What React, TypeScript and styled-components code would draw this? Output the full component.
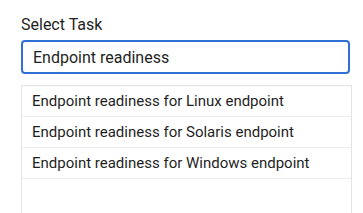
import React from 'react'
import styled, { createGlobalStyle } from 'styled-components'

const GlobalStyle = createGlobalStyle`
  body {
    margin: 0;
    background: #ffffff;
    font-family: Roboto, "Liberation Sans", sans-serif;
    color: #1f1f1f;
    overflow: hidden;
  }
`

const options = [
  'Endpoint readiness for Linux endpoint',
  'Endpoint readiness for Solaris endpoint',
  'Endpoint readiness for Windows endpoint',
]

export default function App() {
  return (
    <>
      <GlobalStyle />
      <Field>
        <Label htmlFor="task">Select Task</Label>
        <SearchInput id="task" defaultValue="Endpoint readiness" />
        <OptionList>
          {options.map((o) => (
            <OptionRow key={o}>{o}</OptionRow>
          ))}
        </OptionList>
      </Field>
    </>
  )
}

const Field = styled.div`
  display: flex;
  flex-direction: column;
  padding: 15px 0 0 21px;
  width: 331px;
`

const Label = styled.label`
  font-size: 16px;
  line-height: 20px;
  margin-bottom: 5px;
  color: #1f1f1f;
`

const SearchInput = styled.input`
  box-sizing: border-box;
  width: 329px;
  height: 34px;
  padding: 0 10px;
  border: 2px solid #2f6fd6;
  border-radius: 4px;
  font-family: Roboto, "Liberation Sans", sans-serif;
  font-size: 16px;
  color: #1f1f1f;
  outline: none;
`

const OptionList = styled.ul`
  list-style: none;
  margin: 11px 0 0;
  padding: 0;
  box-sizing: border-box;
  width: 331px;
  height: 128px;
  border: 1px solid #e3e3e3;
  border-bottom: none;
`

const OptionRow = styled.li`
  height: 31px;
  box-sizing: border-box;
  padding: 0 0 0 10px;
  display: flex;
  align-items: center;
  font-size: 15px;
  color: #1f1f1f;
  border-bottom: 1px solid #ebeeee;
`
